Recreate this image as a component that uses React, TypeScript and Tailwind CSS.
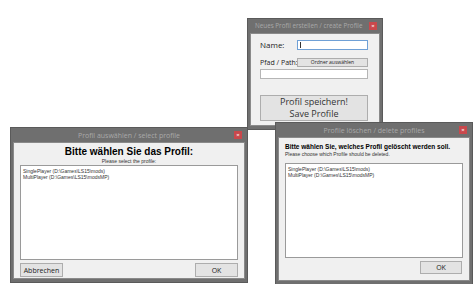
import React from "react";

const sans = { fontFamily: '"Liberation Sans", Arial, sans-serif' };
const ui = { fontFamily: '"Open Sans", "Noto Sans", sans-serif' };

function Close() {
  return (
    <div className="absolute right-[3px] top-[3px] w-[8px] h-[8px] bg-[#c9484c] flex items-center justify-center text-white text-[6px] leading-none">
      ×
    </div>
  );
}

function Frame({
  title,
  className,
  titleClass,
  children,
}: {
  title: string;
  className: string;
  titleClass: string;
  children: React.ReactNode;
}) {
  return (
    <div className={`absolute bg-[#6f6f6f] border border-[#5a5a5a] flex flex-col px-[2px] pb-[3px] ${className}`}>
      <div className={`relative h-[14px] shrink-0 flex items-center ${titleClass}`}>
        <span className="leading-none text-[#a9a9a9] whitespace-nowrap" style={ui}>
          {title}
        </span>
        <Close />
      </div>
      <div className="flex-1 bg-[#f0f0f0] border border-[#8a8a8a] flex flex-col">{children}</div>
    </div>
  );
}

function ListBox() {
  return (
    <div className="flex-1 bg-white border border-[#9a9a9a] px-[2px] pt-[2px] text-[5px] leading-[6px] text-[#333]" style={sans}>
      <div>SinglePlayer (D:\Games\LS15\mods)</div>
      <div>MultiPlayer (D:\Games\LS15\modsMP)</div>
    </div>
  );
}

function Btn({ children, className }: { children: React.ReactNode; className: string }) {
  return (
    <div
      className={`bg-[#e3e3e3] border border-[#adadad] flex items-center justify-center text-[#222] ${className}`}
      style={ui}
    >
      {children}
    </div>
  );
}

export default function App() {
  return (
    <div className="relative w-[474px] h-[284px] bg-white overflow-hidden">
      {/* Create profile window */}
      <Frame
        title="Neues Profil erstellen / create Profile"
        titleClass="justify-start pl-[5px] text-[6.3px]"
        className="left-[247px] top-[18px] w-[136px] h-[112px]"
      >
        <div className="flex flex-col pl-[9px] pr-[11px] pt-[6px]">
          <div className="flex items-center h-[10px]">
            <span className="w-[37px] text-[8px] text-[#222] leading-none" style={ui}>Name:</span>
            <div className="flex-1 h-[10px] bg-white border border-[#6fa0d6] flex items-center pl-[2px]">
              <div className="w-[1px] h-[6px] bg-[#333]" />
            </div>
          </div>
          <div className="flex items-center h-[9px] mt-[8px]">
            <span className="w-[37px] text-[7px] text-[#222] leading-none whitespace-nowrap" style={ui}>Pfad / Path:</span>
            <Btn className="flex-1 h-[9px] text-[5px] leading-none">Ordner auswählen</Btn>
          </div>
          <div className="h-[10px] mt-[2px] bg-white border border-[#b5b5b5]" />
          <Btn className="mt-[16px] h-[26px] flex-col text-[9px] leading-[12px] text-[#333]">
            <span className="block">Profil speichern!</span>
            <span className="block">Save Profile</span>
          </Btn>
        </div>
      </Frame>

      {/* Select profile window */}
      <Frame
        title="Profil auswählen / select profile"
        titleClass="justify-center text-[7px]"
        className="left-[10px] top-[127px] w-[238px] h-[156px]"
      >
        <div className="flex flex-col px-[6px] pt-[3px] h-full">
          <div className="text-center text-[10px] font-bold leading-[12px] text-black" style={sans}>
            Bitte wählen Sie das Profil:
          </div>
          <div className="text-center text-[5px] leading-[6px] text-[#333]" style={sans}>
            Please select the profile:
          </div>
          <div className="mt-[1px] h-[95px] flex flex-col">
            <ListBox />
          </div>
          <div className="flex justify-between mt-[3px]">
            <Btn className="w-[43px] h-[14px] text-[7px] leading-none">Abbrechen</Btn>
            <Btn className="w-[43px] h-[14px] text-[7px] leading-none">OK</Btn>
          </div>
        </div>
      </Frame>

      {/* Delete profile window */}
      <Frame
        title="Profile löschen / delete profiles"
        titleClass="justify-center text-[7px]"
        className="left-[275px] top-[122px] w-[198px] h-[163px]"
      >
        <div className="flex flex-col px-[6px] pt-[4px] h-full">
          <div className="text-[6.5px] font-bold leading-[9px] text-black whitespace-nowrap" style={sans}>
            Bitte wählen Sie, welches Profil gelöscht werden soll.
          </div>
          <div className="text-[5px] leading-[6px] text-[#333]" style={sans}>
            Please choose which Profile should be deleted.
          </div>
          <div className="mt-[6px] h-[95px] flex flex-col">
            <ListBox />
          </div>
          <div className="flex justify-end mt-[3px] pr-[1px]">
            <Btn className="w-[42px] h-[13px] text-[7px] leading-none">OK</Btn>
          </div>
        </div>
      </Frame>
    </div>
  );
}
